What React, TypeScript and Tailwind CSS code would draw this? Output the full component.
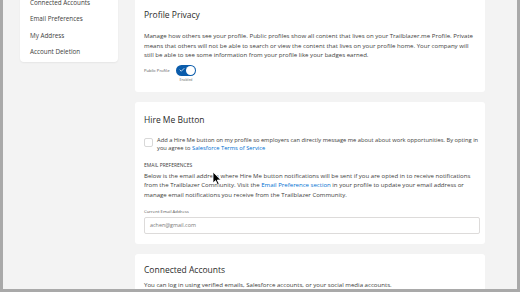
import { Check } from 'lucide-react';

const font = { fontFamily: '"Open Sans", "Liberation Sans", sans-serif' };

const sideLinks = ['Connected Accounts', 'Email Preferences', 'My Address', 'Account Deletion'];

const Toggle = () => (
  <div className="w-[20px] h-[11px] rounded-full bg-[#0b5cab] flex items-center justify-between pl-[3px] pr-[1px]">
    <Check size={6} strokeWidth={3} className="text-white" />
    <div className="w-[9px] h-[9px] rounded-full bg-white" />
  </div>
);

const Cursor = () => (
  <svg className="absolute left-[209px] top-[171px]" width="10" height="15" viewBox="0 0 10 15">
    <path d="M1 1 L1 12 L3.6 9.6 L5.6 14 L7.2 13.3 L5.3 9 L8.8 9 Z" fill="#000" stroke="#fff" strokeWidth="0.8" />
  </svg>
);

export default function App() {
  return (
    <div
      className="relative w-[520px] h-[292px] overflow-hidden bg-[#f3f3f3] border-l-[3px] border-r-[3px] border-b-[3px] border-[#a9a9a9] text-[#3e3e3c]"
      style={font}
    >
      <div className="flex pl-[17px] pr-[32px]">
        {/* Sidebar */}
        <div className="w-[98px] -mt-[10px] self-start bg-white rounded-b-[4px] shadow-[0_1px_2px_rgba(0,0,0,0.06)] pl-[10px] pt-[5px] pb-[1px]">
          {sideLinks.map((l) => (
            <div key={l} className="h-[16.4px] leading-[16.4px] text-[6.3px] text-[#3e3e3c]">
              {l}
            </div>
          ))}
        </div>

        {/* Main column */}
        <div className="ml-[17px] w-[350px] -mt-[2px] flex flex-col gap-[10px]">
          {/* Profile Privacy */}
          <div className="bg-white rounded-[3px] pl-[9px] pr-[4px] pt-3 pb-[10px]">
            <h2 className="text-[8.5px] leading-[10px] text-[#2b2b2b]">Profile Privacy</h2>
            <p className="mt-[11px] text-[6.1px] leading-[9.5px]">
              Manage how others see your profile. Public profiles show all content that lives on your Trailblazer.me Profile. Private
              <br />
              means that others will not be able to search or view the content that lives on your profile home. Your company will
              <br />
              still be able to see some information from your profile like your badges earned.
            </p>
            <div className="mt-[5px] flex items-start gap-[4px]">
              <span className="text-[4.2px] leading-[12px] text-[#555] w-[28px]">Public Profile</span>
              <div className="flex flex-col items-center">
                <Toggle />
                <span className="mt-[1px] text-[3.4px] leading-[5px] text-[#666]">Enabled</span>
              </div>
            </div>
          </div>

          {/* Hire Me Button */}
          <div className="bg-white rounded-[3px] pl-[9px] pr-[4px] pt-[13px] pb-[10px]">
            <h2 className="text-[8.5px] leading-[10px] text-[#2b2b2b]">Hire Me Button</h2>
            <div className="mt-[11px] flex items-start gap-[4px]">
              <div className="mt-[2px] w-[9px] h-[9px] shrink-0 rounded-[2px] border border-[#d8d8d8] bg-white" />
              <p className="text-[5.75px] leading-[8px]">
                Add a Hire Me button on my profile so employers can directly message me about about work opportunities. By opting in
                <br />
                you agree to <span className="text-[#0070d2]">Salesforce Terms of Service</span>
              </p>
            </div>
            <div className="mt-[9px] text-[5px] leading-[8px] uppercase text-[#3e3e3c]">Email Preferences</div>
            <p className="mt-[3px] text-[6.05px] leading-[9.75px]">
              Below is the email address where Hire Me button notifications will be sent if you are opted in to receive notifications
              <br />
              from the Trailblazer Community. Visit the <span className="text-[#0070d2]">Email Preference section</span> in your profile to update your email address or
              <br />
              manage email notifications you receive from the Trailblazer Community.
            </p>
            <div className="mt-[7px] text-[4.3px] leading-[6px] text-[#555]">Current Email Address</div>
            <div className="mt-[3px] w-[336px] h-[17px] border border-[#dddbda] rounded-[2px] flex items-center pl-[5px] text-[5.4px] text-[#777]">
              achen@gmail.com
            </div>
          </div>

          {/* Connected Accounts */}
          <div className="bg-white rounded-[3px] pl-[9px] pr-[4px] pt-[11px] pb-[10px]">
            <h2 className="text-[8.5px] leading-[10px] text-[#2b2b2b]">Connected Accounts</h2>
            <p className="mt-[5px] text-[6.1px] leading-[9.5px]">
              You can log in using verified emails, Salesforce accounts, or your social media accounts.
            </p>
          </div>
        </div>
      </div>
      <Cursor />
    </div>
  );
}
